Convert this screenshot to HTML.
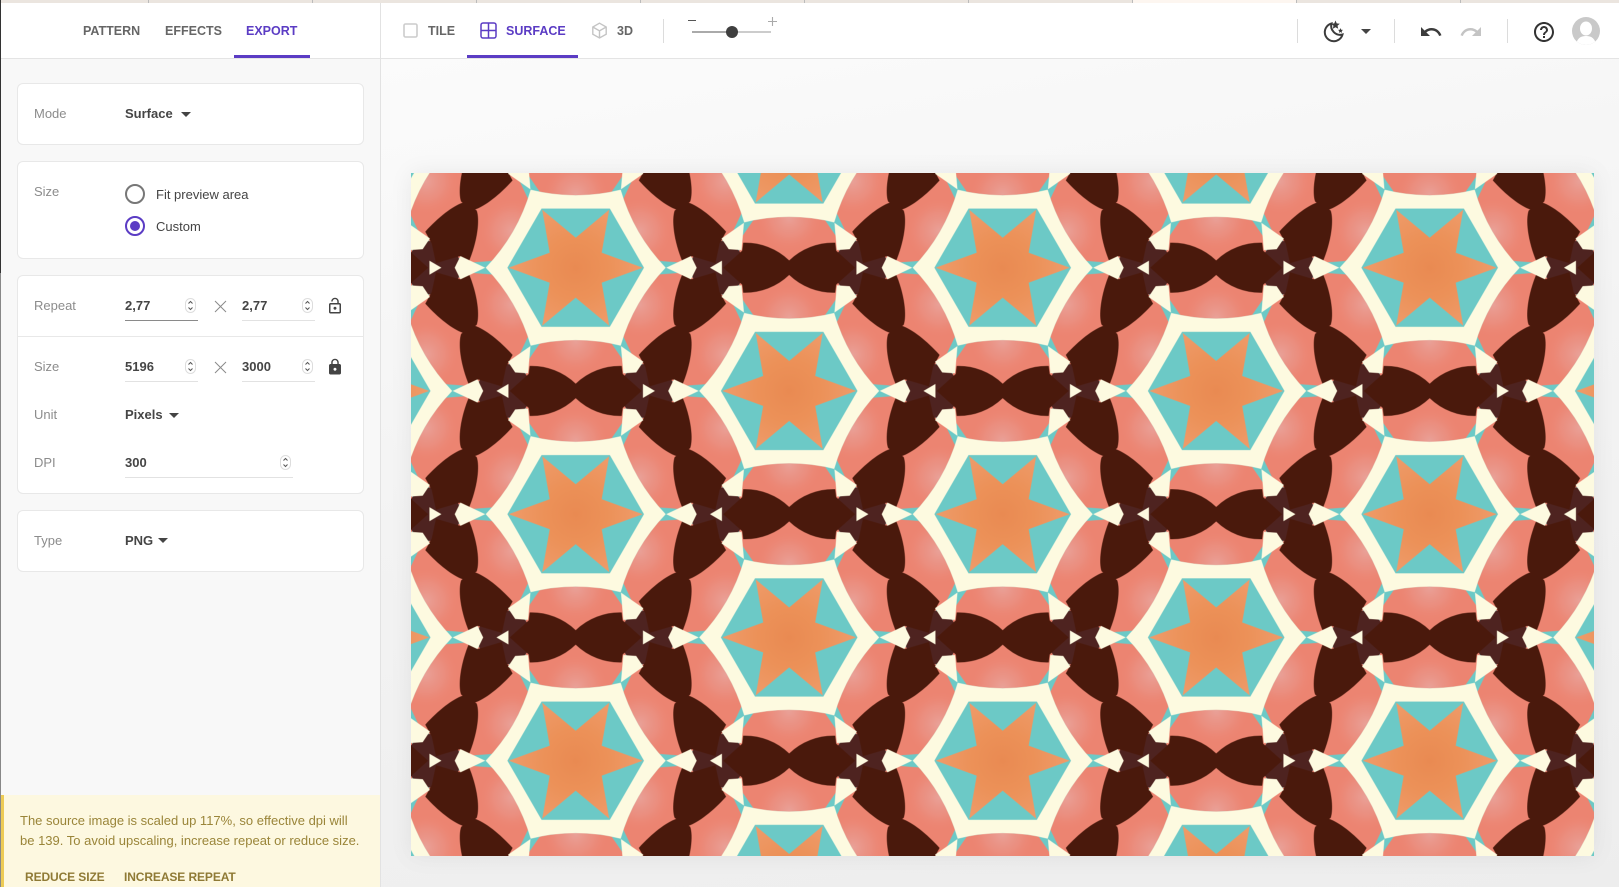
<!DOCTYPE html>
<html><head><meta charset="utf-8"><style>
html,body{margin:0;padding:0;width:1619px;height:887px;overflow:hidden;background:#fff;font-family:"Liberation Sans",sans-serif}
.a{position:absolute}
.t{position:absolute;white-space:nowrap;line-height:16px;height:16px;font-size:13px}
.l{color:#8c8c8c;left:34px}
.v{color:#454545;font-weight:700;left:125px}
.card{position:absolute;left:17px;width:345px;background:#fff;border:1px solid #e8e8e8;border-radius:6px}
.tab{font-weight:700;font-size:12.5px;letter-spacing:0;color:#666;top:22.5px}
.p{color:#5b3cc4}
.caret{position:absolute;width:0;height:0;border-left:5px solid transparent;border-right:5px solid transparent;border-top:5px solid #444}
.ul{position:absolute;height:1px;background:#e2e2e2}
.sep{position:absolute;width:1px;background:#dcdcdc;top:19px;height:24px}
.w{color:#9a8539;font-size:13px}
.b{color:#8f7a35;font-size:12px;font-weight:700;letter-spacing:-.1px}
svg{position:absolute;display:block}
</style></head><body>
<!-- browser strip -->
<div class="a" style="left:0;top:0;width:1619px;height:3px;background:#ebe5df"></div>
<div class="a" style="left:1132px;top:0;width:164px;height:3px;background:#fdf6f0"></div>
<div class="a" style="left:148px;top:0;width:1px;height:3px;background:#bbb"></div>
<div class="a" style="left:312px;top:0;width:1px;height:3px;background:#bbb"></div>
<div class="a" style="left:476px;top:0;width:1px;height:3px;background:#bbb"></div>
<div class="a" style="left:640px;top:0;width:1px;height:3px;background:#bbb"></div>
<div class="a" style="left:804px;top:0;width:1px;height:3px;background:#bbb"></div>
<div class="a" style="left:968px;top:0;width:1px;height:3px;background:#bbb"></div>
<div class="a" style="left:1132px;top:0;width:1px;height:3px;background:#bbb"></div>
<div class="a" style="left:1296px;top:0;width:1px;height:3px;background:#bbb"></div>
<div class="a" style="left:1460px;top:0;width:1px;height:3px;background:#bbb"></div>
<!-- header -->
<div class="a" style="left:0;top:3px;width:1619px;height:55px;background:#fff"></div>
<div class="a" style="left:0;top:58px;width:1619px;height:1px;background:#e4e4e4"></div>
<!-- canvas -->
<div class="a" style="left:381px;top:59px;width:1238px;height:828px;background:linear-gradient(170deg,#fbfbfb 0%,#f3f3f3 45%,#ededed 100%)"></div>
<!-- sidebar -->
<div class="a" style="left:0;top:59px;width:380px;height:828px;background:#f8f8f8"></div>
<div class="a" style="left:380px;top:3px;width:1px;height:884px;background:#e2e2e2"></div>
<div class="a" style="left:0;top:0;width:1px;height:273px;background:#333"></div>
<div class="a" style="left:0;top:273px;width:1px;height:614px;background:#888"></div>

<div class="t tab" style="left:83px">PATTERN</div>
<div class="t tab" style="left:165px">EFFECTS</div>
<div class="t tab p" style="left:246px">EXPORT</div>
<div class="a" style="left:234px;top:55px;width:76px;height:3px;background:#5b3cc4"></div>

<div class="card" style="top:83px;height:60px"></div>
<div class="t l" style="top:106px">Mode</div>
<div class="t v" style="top:106px">Surface</div>
<div class="caret" style="left:181px;top:111.5px"></div>

<div class="card" style="top:161px;height:96px"></div>
<div class="t l" style="top:184px">Size</div>
<svg style="left:124px;top:183px" width="22" height="54"><circle cx="11" cy="11" r="9" fill="none" stroke="#777" stroke-width="2"/><circle cx="11" cy="43" r="9" fill="none" stroke="#5b3cc4" stroke-width="2"/><circle cx="11" cy="43" r="5" fill="#5b3cc4"/></svg>
<div class="t" style="left:156px;top:187px;color:#444">Fit preview area</div>
<div class="t" style="left:156px;top:219px;color:#444">Custom</div>

<div class="card" style="top:275px;height:217px"></div>
<div class="a" style="left:18px;top:336px;width:345px;height:1px;background:#e8e8e8"></div>
<div class="t l" style="top:298px">Repeat</div>
<div class="t v" style="top:298px">2,77</div>
<div class="t v" style="top:298px;left:242px">2,77</div>
<div class="ul" style="left:125px;top:320px;width:73px;background:#8a8a8a"></div>
<div class="ul" style="left:242px;top:320px;width:73px"></div>
<div class="t l" style="top:359px">Size</div>
<div class="t v" style="top:359px">5196</div>
<div class="t v" style="top:359px;left:242px">3000</div>
<div class="ul" style="left:125px;top:381px;width:73px"></div>
<div class="ul" style="left:242px;top:381px;width:73px"></div>
<div class="t l" style="top:407px">Unit</div>
<div class="t v" style="top:407px">Pixels</div>
<div class="caret" style="left:169px;top:412.5px"></div>
<div class="t l" style="top:455px">DPI</div>
<div class="t v" style="top:455px">300</div>
<div class="ul" style="left:125px;top:477px;width:168px"></div>
<svg width="0" height="0" style="left:0;top:0"><defs>
<g id="spin"><rect x="0.5" y="0.5" width="10" height="14" rx="5" fill="#fff" stroke="#ddd"/><path d="M3.5 5.5L5.5 3.5L7.5 5.5M3.5 9.5L5.5 11.5L7.5 9.5" fill="none" stroke="#555" stroke-width="1"/></g>
<g id="xx"><path d="M1 1L12 12M12 1L1 12" fill="none" stroke="#8a8a8a" stroke-width="1"/></g>
</defs></svg>
<svg style="left:185px;top:298px" width="11" height="15"><use href="#spin"/></svg>
<svg style="left:302px;top:298px" width="11" height="15"><use href="#spin"/></svg>
<svg style="left:185px;top:359px" width="11" height="15"><use href="#spin"/></svg>
<svg style="left:302px;top:359px" width="11" height="15"><use href="#spin"/></svg>
<svg style="left:280px;top:455px" width="11" height="15"><use href="#spin"/></svg>
<svg style="left:214px;top:299.5px" width="13" height="13"><use href="#xx"/></svg>
<svg style="left:214px;top:360.5px" width="13" height="13"><use href="#xx"/></svg>
<svg style="left:326px;top:297px" width="18" height="18" viewBox="0 0 24 24"><path fill="#444" d="M12 17c1.1 0 2-.9 2-2s-.9-2-2-2-2 .9-2 2 .9 2 2 2zm6-9h-1V6c0-2.76-2.24-5-5-5S7 3.24 7 6h1.9c0-1.71 1.39-3.1 3.1-3.1 1.71 0 3.1 1.39 3.1 3.1v2H6c-1.1 0-2 .9-2 2v10c0 1.1.9 2 2 2h12c1.1 0 2-.9 2-2V10c0-1.1-.9-2-2-2zm0 12H6V10h12v10z"/></svg>
<svg style="left:326px;top:358px" width="18" height="18" viewBox="0 0 24 24"><path fill="#444" d="M18 8h-1V6c0-2.76-2.24-5-5-5S7 3.24 7 6v2H6c-1.1 0-2 .9-2 2v10c0 1.1.9 2 2 2h12c1.1 0 2-.9 2-2V10c0-1.1-.9-2-2-2zm-6 9c-1.1 0-2-.9-2-2s.9-2 2-2 2 .9 2 2-.9 2-2 2zm3.1-9H8.9V6c0-1.71 1.39-3.1 3.1-3.1 1.71 0 3.1 1.39 3.1 3.1v2z"/></svg>

<div class="card" style="top:510px;height:60px"></div>
<div class="t l" style="top:533px">Type</div>
<div class="t v" style="top:533px">PNG</div>
<div class="caret" style="left:158px;top:538px"></div>

<!-- warning -->
<div class="a" style="left:1px;top:795px;width:379px;height:92px;background:#fdf8e0"></div>
<div class="a" style="left:1px;top:795px;width:3px;height:92px;background:#edcb55"></div>
<div class="t w" style="left:20px;top:812.5px">The source image is scaled up 117%, so effective dpi will</div>
<div class="t w" style="left:20px;top:832.5px">be 139. To avoid upscaling, increase repeat or reduce size.</div>
<div class="t b" style="left:25px;top:869px">REDUCE SIZE</div>
<div class="t b" style="left:124px;top:869px">INCREASE REPEAT</div>

<!-- toolbar -->
<svg style="left:403px;top:23px" width="15" height="15"><rect x="1" y="1" width="13" height="13" rx="1.5" fill="none" stroke="#ccc" stroke-width="1.6"/></svg>
<div class="t tab" style="left:428px">TILE</div>
<svg style="left:480px;top:22px" width="17" height="17"><rect x="1" y="1" width="15" height="15" rx="2" fill="none" stroke="#5b3cc4" stroke-width="1.5"/><path d="M8.5 1V16M1 8.5H16" stroke="#5b3cc4" stroke-width="1.5"/></svg>
<div class="t tab p" style="left:506px">SURFACE</div>
<div class="a" style="left:467px;top:55px;width:111px;height:3px;background:#5b3cc4"></div>
<svg style="left:591px;top:22px" width="17" height="17"><path d="M8.5 1.2L15.2 5V12.2L8.5 16L1.8 12.2V5ZM1.8 5L8.5 8.8L15.2 5M8.5 8.8V16" fill="none" stroke="#c4c4c4" stroke-width="1.4"/></svg>
<div class="t tab" style="left:617px">3D</div>
<div class="sep" style="left:663px"></div>
<div class="a" style="left:688px;top:20px;width:7.5px;height:1.4px;background:#555"></div>
<svg style="left:767px;top:16px" width="11" height="11"><path d="M5.5 1V10M1 5.5H10" stroke="#aaa" stroke-width="1.1"/></svg>
<div class="a" style="left:692px;top:31px;width:40px;height:1.5px;background:#aaa"></div>
<div class="a" style="left:732px;top:31px;width:39px;height:1.5px;background:#ccc"></div>
<div class="a" style="left:726px;top:26px;width:12px;height:12px;border-radius:50%;background:#3f3f3f"></div>

<div class="sep" style="left:1297px"></div>
<svg style="left:1322px;top:20px" width="26" height="24"><path d="M9.5 3.5A9 9 0 1 0 20.5 14.5A9 9 0 0 1 9.5 3.5Z" fill="none" stroke="#3c3c3c" stroke-width="2"/><path d="M13.5 .5L14.7 3.4L17.8 3.7L15.5 5.7L16.2 8.8L13.5 7.2L10.8 8.8L11.5 5.7L9.2 3.7L12.3 3.4ZM18.5 8L19.2 9.7L21 9.9L19.7 11.1L20.1 12.9L18.5 12L16.9 12.9L17.3 11.1L16 9.9L17.8 9.7Z" fill="#3c3c3c"/></svg>
<div class="caret" style="left:1361px;top:29px"></div>
<div class="sep" style="left:1394px"></div>
<svg style="left:1419px;top:19.5px" width="24" height="24" viewBox="0 0 24 24"><path fill="#3c3c3c" d="M12.5 8c-2.65 0-5.05.99-6.9 2.6L2 7v9h9l-3.62-3.62c1.39-1.16 3.16-1.88 5.12-1.88 3.54 0 6.55 2.31 7.6 5.5l2.37-.78C21.08 11.03 17.15 8 12.5 8z"/></svg>
<svg style="left:1459px;top:19.5px" width="24" height="24" viewBox="0 0 24 24"><path fill="#c4c4c4" d="M18.4 10.6C16.55 8.99 14.15 8 11.5 8c-4.65 0-8.58 3.03-9.96 7.22L3.9 16c1.05-3.19 4.05-5.5 7.6-5.5 1.95 0 3.73.72 5.12 1.88L13 16h9V7l-3.6 3.6z"/></svg>
<div class="sep" style="left:1507px"></div>
<svg style="left:1532px;top:19.5px" width="24" height="24" viewBox="0 0 24 24"><path fill="#333" d="M11 18h2v-2h-2v2zm1-16C6.48 2 2 6.48 2 12s4.48 10 10 10 10-4.48 10-10S17.52 2 12 2zm0 18c-4.41 0-8-3.59-8-8s3.59-8 8-8 8 3.59 8 8-3.59 8-8 8zm0-14c-2.21 0-4 1.79-4 4h2c0-1.1.9-2 2-2s2 .9 2 2c0 2-3 1.75-3 5h2c0-2.25 3-2.5 3-5 0-2.21-1.79-4-4-4z"/></svg>
<svg style="left:1572px;top:17px" width="28" height="28"><defs><clipPath id="av"><circle cx="14" cy="14" r="14"/></clipPath></defs><circle cx="14" cy="14" r="14" fill="#c9c9c9"/><g clip-path="url(#av)"><ellipse cx="14" cy="11.5" rx="6" ry="7" fill="#fff"/><path d="M3.5 30C4.5 21 9 19 14 19S23.5 21 24.5 30Z" fill="#fff"/></g></svg>

<!-- pattern image -->
<svg style="left:411px;top:173px;box-shadow:0 0 22px rgba(0,0,0,.07)" width="1183" height="683" viewBox="0 0 1183 683">
<defs>
<radialGradient id="lt" gradientUnits="userSpaceOnUse" cx="0" cy="-50" r="34"><stop offset="0" stop-color="#e9a198"/><stop offset=".55" stop-color="#ea9487" stop-opacity=".6"/><stop offset="1" stop-color="#ec8471" stop-opacity="0"/></radialGradient>
<radialGradient id="lb" gradientUnits="userSpaceOnUse" cx="0" cy="50" r="34"><stop offset="0" stop-color="#e9a198"/><stop offset=".55" stop-color="#ea9487" stop-opacity=".6"/><stop offset="1" stop-color="#ec8471" stop-opacity="0"/></radialGradient>
<radialGradient id="st" gradientUnits="userSpaceOnUse" cx="0" cy="0" r="62"><stop offset="0" stop-color="#e98a52"/><stop offset=".5" stop-color="#ec9158"/><stop offset="1" stop-color="#ee9a68"/></radialGradient>
<path id="pk" d="M-36,-47.3A187,187 0 0 1 36,-47.3L50,-27L50,27L36,47.3A187,187 0 0 1 -36,47.3L-50,27L-50,-27Z"/>
<g id="pe"><use href="#pk" fill="#ec8471"/><use href="#pk" fill="url(#lt)"/><use href="#pk" fill="url(#lb)"/></g>
<g id="P"><use href="#pe" transform="translate(0,123.25)"/><use href="#pe" transform="rotate(60) translate(0,123.25)"/><use href="#pe" transform="rotate(-60) translate(0,123.25)"/></g>
<g id="H" fill="#4e2320"><circle cx="142.25" cy="0" r="27"/><circle cx="-142.25" cy="0" r="27"/></g>
<path id="lo0" d="M66,0L47,17L46,25A63.5,63.5 0 0 1 0,7.3L-1,0L0,-7.3A63.5,63.5 0 0 1 46,-25L47,-17Z"/>
<path id="lo1" d="M66,0L51,13.5L44,25C25,21 8,14 0,7L-1,0L0,-9C6,-16 25,-25 50,-28L48,-17Z"/>
<g id="D" fill="#4a190c">
<g transform="translate(0,123.25)"><use href="#lo0"/><use href="#lo0" transform="rotate(180)"/></g>
<g transform="rotate(-60) translate(0,123.25)"><use href="#lo1"/><use href="#lo1" transform="rotate(180)"/></g>
<g transform="rotate(60) translate(0,123.25)"><use href="#lo1" transform="scale(1,-1)"/><use href="#lo1" transform="rotate(180) scale(1,-1)"/></g>
</g>
<path id="dt" d="M90.5,0L115.25,-11.6L121,0L115.25,11.6Z" fill="#fdfae0"/>
<g id="T">
<use href="#dt"/><use href="#dt" transform="rotate(60)"/><use href="#dt" transform="rotate(120)"/><use href="#dt" transform="rotate(180)"/><use href="#dt" transform="rotate(240)"/><use href="#dt" transform="rotate(300)"/>
<path d="M134.25,0L146.25,-7L146.25,7ZM-134.25,0L-146.25,-7L-146.25,7Z" fill="#fdfae0"/>
<path d="M90,0A187,187 0 0 0 45,77.94A187,187 0 0 0 -45,77.94A187,187 0 0 0 -90,0A187,187 0 0 0 -45,-77.94A187,187 0 0 0 45,-77.94A187,187 0 0 0 90,0Z" fill="#fdfae0"/>
<path d="M68.3,0L34.15,59.15L-34.15,59.15L-68.3,0L-34.15,-59.15L34.15,-59.15Z" fill="#6cc9c6"/>
<path d="M67,0L26,15L33.5,58L0,30L-33.5,58L-26,15L-67,0L-26,-15L-33.5,-58L0,-30L33.5,-58L26,-15Z" fill="url(#st)"/>
</g>
<pattern id="pat" patternUnits="userSpaceOnUse" width="427" height="246.5" patternTransform="translate(164.7,94.7)">
<rect x="-1" y="-1" width="430" height="250" fill="#6cc9c6"/>
<use href="#P"/><use href="#P" x="427"/><use href="#P" y="246.5"/><use href="#P" x="427" y="246.5"/><use href="#P" x="213.5" y="123.25"/><use href="#P" x="-213.5" y="123.25"/><use href="#P" x="640.5" y="123.25"/><use href="#P" x="213.5" y="-123.25"/><use href="#P" x="213.5" y="369.75"/>
<use href="#H"/><use href="#H" x="427"/><use href="#H" y="246.5"/><use href="#H" x="427" y="246.5"/><use href="#H" x="213.5" y="123.25"/><use href="#H" x="-213.5" y="123.25"/><use href="#H" x="640.5" y="123.25"/><use href="#H" x="213.5" y="-123.25"/><use href="#H" x="213.5" y="369.75"/>
<use href="#D"/><use href="#D" x="427"/><use href="#D" y="246.5"/><use href="#D" x="427" y="246.5"/><use href="#D" x="213.5" y="123.25"/><use href="#D" x="-213.5" y="123.25"/><use href="#D" x="640.5" y="123.25"/><use href="#D" x="213.5" y="-123.25"/><use href="#D" x="213.5" y="369.75"/>
<use href="#T"/><use href="#T" x="427"/><use href="#T" y="246.5"/><use href="#T" x="427" y="246.5"/><use href="#T" x="213.5" y="123.25"/><use href="#T" x="-213.5" y="123.25"/><use href="#T" x="640.5" y="123.25"/><use href="#T" x="213.5" y="-123.25"/><use href="#T" x="213.5" y="369.75"/>
</pattern>
</defs>
<rect width="1183" height="683" fill="url(#pat)"/>
</svg>
</body></html>
